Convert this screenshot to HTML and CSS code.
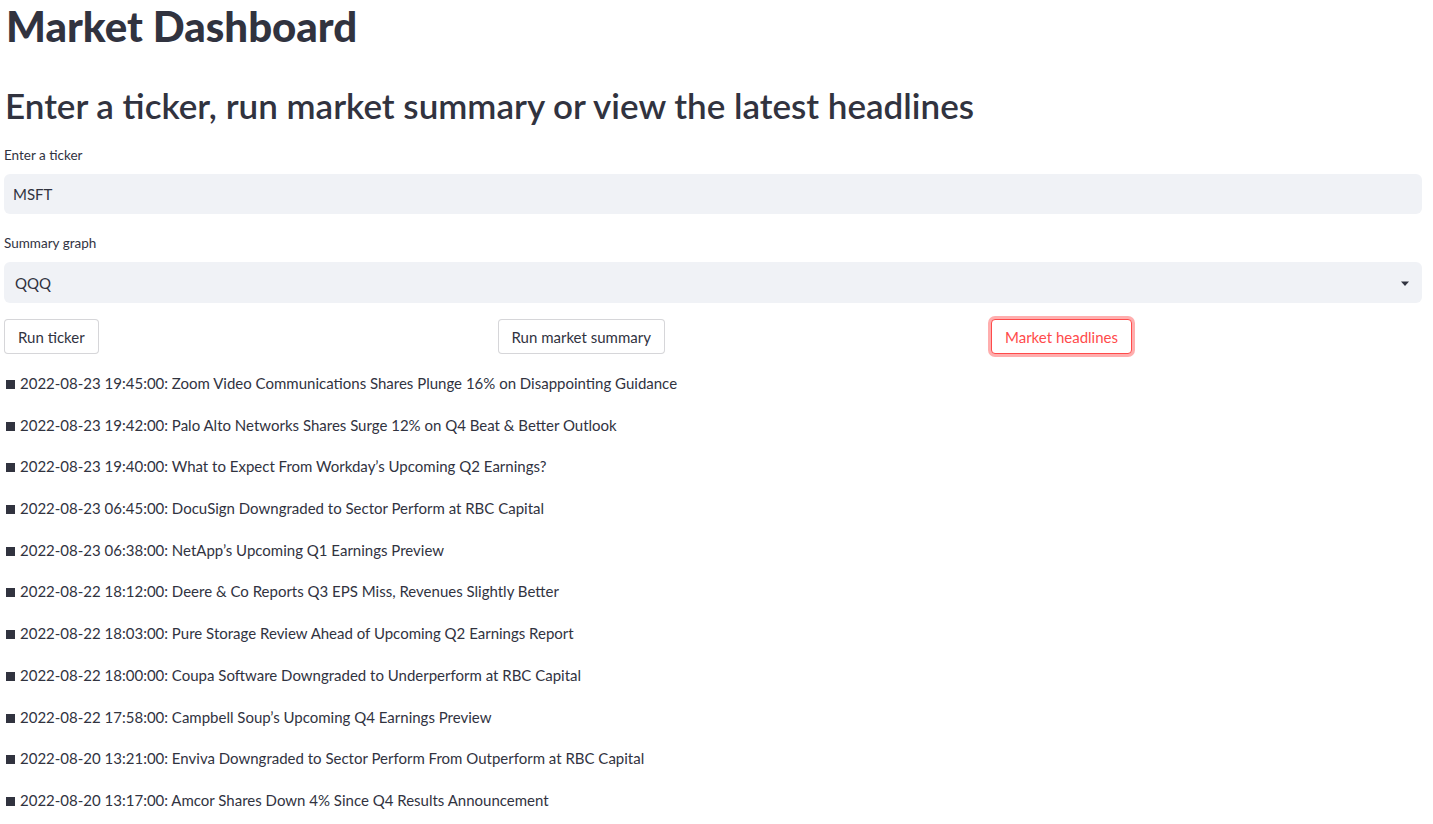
FILE: index.html
```html
<!DOCTYPE html>
<html lang="en">
<head>
    <meta charset="UTF-8">
    <meta name="viewport" content="width=device-width, initial-scale=1.0">
    <title>Market Dashboard</title>
    <link rel="stylesheet" href="styles.css">
</head>
<body>

<div class="main">
    <h1 class="title">Market Dashboard</h1>
    <h2 class="subtitle">Enter a ticker, run market summary or view the latest headlines</h2>

    <div class="field">
        <label class="field-label" for="ticker">Enter a ticker</label>
        <input type="text" id="ticker" class="text-input" value="MSFT">
    </div>

    <div class="field">
        <div class="field-label">Summary graph</div>
        <div class="select-box">
            <span>QQQ</span>
            <svg class="caret" width="10" height="6" viewBox="0 0 10 6"><path d="M1 0.5h8L5 5z" fill="#31333f"/></svg>
        </div>
    </div>

    <div class="button-row">
        <div class="col"><button class="btn">Run ticker</button></div>
        <div class="col"><button class="btn">Run market summary</button></div>
        <div class="col"><button class="btn btn-focus">Market headlines</button></div>
    </div>

    <div class="headlines" id="headlines"></div>
</div>

<script>
    const headlines = [
        "2022-08-23 19:45:00: Zoom Video Communications Shares Plunge 16% on Disappointing Guidance",
        "2022-08-23 19:42:00: Palo Alto Networks Shares Surge 12% on Q4 Beat & Better Outlook",
        "2022-08-23 19:40:00: What to Expect From Workday\u2019s Upcoming Q2 Earnings?",
        "2022-08-23 06:45:00: DocuSign Downgraded to Sector Perform at RBC Capital",
        "2022-08-23 06:38:00: NetApp\u2019s Upcoming Q1 Earnings Preview",
        "2022-08-22 18:12:00: Deere & Co Reports Q3 EPS Miss, Revenues Slightly Better",
        "2022-08-22 18:03:00: Pure Storage Review Ahead of Upcoming Q2 Earnings Report",
        "2022-08-22 18:00:00: Coupa Software Downgraded to Underperform at RBC Capital",
        "2022-08-22 17:58:00: Campbell Soup\u2019s Upcoming Q4 Earnings Preview",
        "2022-08-20 13:21:00: Enviva Downgraded to Sector Perform From Outperform at RBC Capital",
        "2022-08-20 13:17:00: Amcor Shares Down 4% Since Q4 Results Announcement"
    ];

    const list = document.getElementById('headlines');
    headlines.forEach(function(text) {
        const p = document.createElement('p');
        p.className = 'headline';
        const bullet = document.createElement('span');
        bullet.className = 'bullet';
        p.appendChild(bullet);
        p.appendChild(document.createTextNode(text));
        list.appendChild(p);
    });
</script>

</body>
</html>
```

FILE: styles.css
```css
body {
    margin: 0;
    font-family: 'Lato', 'Noto Sans', sans-serif;
    color: #31333f;
    background: #ffffff;
}
.main {
    padding: 0 11px 0 4px;
}
.title {
    font-size: 42px;
    font-weight: 900;
    line-height: 52px;
    margin: 0 0 0 2px;
    padding: 0;
}
.subtitle {
    font-size: 35px;
    font-weight: 600;
    line-height: 44px;
    margin: 31px 0 0 1px;
}
.field {
    margin-top: 19px;
}
.field + .field {
    margin-top: 20px;
}
.field-label {
    display: block;
    font-size: 13.5px;
    line-height: 18px;
    margin-bottom: 10px;
}
.text-input {
    display: block;
    box-sizing: border-box;
    width: 100%;
    height: 40px;
    border: none;
    border-radius: 6px;
    background: #f0f2f6;
    padding: 0 9px;
    font-family: inherit;
    font-size: 15px;
    color: #31333f;
    outline: none;
}
.select-box {
    box-sizing: border-box;
    height: 41px;
    border-radius: 6px;
    background: #f0f2f6;
    padding: 0 12px 0 11px;
    display: flex;
    align-items: center;
    justify-content: space-between;
    font-size: 15px;
}
.caret {
    margin-top: 2px;
}
.button-row {
    display: grid;
    grid-template-columns: repeat(3, 477px);
    column-gap: 16.5px;
    margin-top: 16px;
}
.btn {
    font-family: inherit;
    font-size: 15px;
    color: #31333f;
    background: #ffffff;
    border: 1px solid rgba(49, 51, 63, 0.2);
    border-radius: 4px;
    height: 35px;
    padding: 0 13px;
    cursor: pointer;
}
.btn-focus {
    color: #ff4b4b;
    border-color: #ff4b4b;
    box-shadow: 0 0 0 3px rgba(255, 75, 75, 0.45);
}
.headlines {
    margin-top: 18px;
}
.headline {
    font-size: 15px;
    line-height: 22px;
    margin: 0 0 19.7px 2px;
}
.bullet {
    display: inline-block;
    width: 9px;
    height: 9px;
    background: #31333f;
    margin-right: 5px;
    vertical-align: 0;
}
```
